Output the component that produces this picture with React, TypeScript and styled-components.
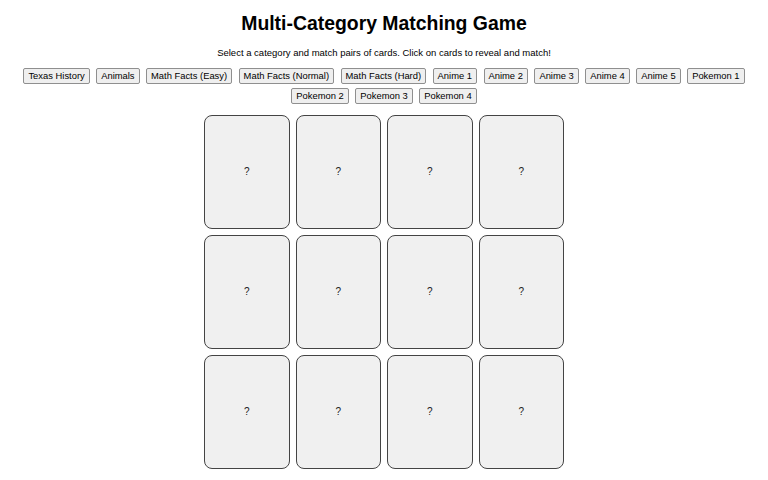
import styled, { createGlobalStyle } from "styled-components";

const GlobalStyle = createGlobalStyle`
  html, body {
    margin: 0;
    padding: 0;
    background: #ffffff;
  }
  body {
    font-family: "Liberation Sans", Arial, sans-serif;
    color: #000;
  }
`;

const Page = styled.div`
  display: flex;
  flex-direction: column;
  align-items: center;
  padding-top: 12px;
`;

const Title = styled.h1`
  margin: 0;
  font-size: 19.4px;
  line-height: 22px;
  font-weight: bold;
`;

const Subtitle = styled.p`
  margin: 13px 0 0;
  font-size: 9.5px;
  line-height: 11px;
`;

const CategoryBar = styled.div`
  display: flex;
  flex-wrap: wrap;
  justify-content: center;
  column-gap: 6.5px;
  row-gap: 4px;
  width: 740px;
  margin-top: 10px;
`;

const CategoryButton = styled.button`
  font-family: "Liberation Sans", Arial, sans-serif;
  font-size: 9.4px;
  line-height: 12px;
  padding: 1px 4px;
  border: 1px solid #8f8f8f;
  border-radius: 2px;
  background: #efefef;
  color: #000;
  cursor: pointer;
`;

const Board = styled.div`
  display: grid;
  grid-template-columns: repeat(4, 1fr);
  gap: 6px;
  width: 360px;
  margin-top: 11px;
`;

const Card = styled.div`
  box-sizing: border-box;
  height: 114px;
  padding-bottom: 2px;
  border: 1.5px solid #444;
  border-radius: 8px;
  background: #f0f0f0;
  display: flex;
  align-items: center;
  justify-content: center;
  font-size: 10px;
  color: #222;
  cursor: pointer;
`;

const categories = [
  "Texas History",
  "Animals",
  "Math Facts (Easy)",
  "Math Facts (Normal)",
  "Math Facts (Hard)",
  "Anime 1",
  "Anime 2",
  "Anime 3",
  "Anime 4",
  "Anime 5",
  "Pokemon 1",
  "Pokemon 2",
  "Pokemon 3",
  "Pokemon 4",
];

export default function App() {
  const cards = Array.from({ length: 12 }, (_, i) => i);
  return (
    <>
      <GlobalStyle />
      <Page>
        <Title>Multi-Category Matching Game</Title>
        <Subtitle>
          Select a category and match pairs of cards. Click on cards to reveal
          and match!
        </Subtitle>
        <CategoryBar>
          {categories.map((c) => (
            <CategoryButton key={c}>{c}</CategoryButton>
          ))}
        </CategoryBar>
        <Board>
          {cards.map((i) => (
            <Card key={i}>?</Card>
          ))}
        </Board>
      </Page>
    </>
  );
}
